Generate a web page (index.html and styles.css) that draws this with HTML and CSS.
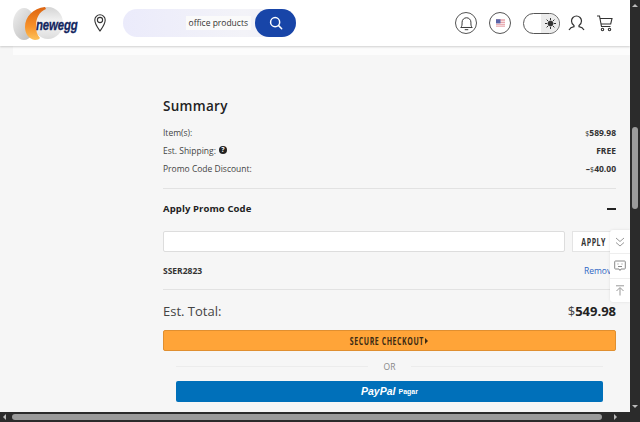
FILE: index.html
```html
<!DOCTYPE html>
<html lang="en">
<head>
<meta charset="utf-8">
<title>Newegg Summary</title>
<link rel="stylesheet" href="styles.css">
</head>
<body>
<div class="window">
  <div class="main-row">
    <div class="page">
      <header class="header">
        <div class="logo">
          <svg class="logo-art" width="68" height="42" viewBox="0 0 68 42">
            <defs>
              <linearGradient id="egg" x1="0" y1="0" x2="1" y2="1"><stop offset="0" stop-color="#f0f0f0"/><stop offset="1" stop-color="#b8b8b8"/></linearGradient>
              <linearGradient id="egg2" x1="0" y1="0" x2="0" y2="1"><stop offset="0" stop-color="#d4d4d4"/><stop offset=".5" stop-color="#f6f6f6"/><stop offset="1" stop-color="#dcdcdc"/></linearGradient>
              <linearGradient id="ora" x1="0" y1="0" x2="0" y2="1"><stop offset="0" stop-color="#dd6410"/><stop offset=".6" stop-color="#f7922a"/><stop offset="1" stop-color="#fdc25a"/></linearGradient>
            </defs>
            <ellipse cx="35" cy="21" rx="15" ry="16" fill="url(#egg2)"/>
            <ellipse cx="11" cy="22" rx="11" ry="16" fill="url(#egg)"/>
            <path d="M32 5C20 6 12 15 12 25c0 7 4 12 10 13 3 0 4-1 5-2-3-3-4-7-4-12C23 16 26 10 33 7z" fill="url(#ora)"/>
          </svg>
          <span class="logo-text">newegg</span>
        </div>
        <svg class="pin" width="12" height="18" viewBox="0 0 12 18" fill="none" stroke="#333" stroke-width="1.100"><path d="M6 17C3.500 13.500 .8 10 .8 6a5.200 5.200 0 0 1 10.400 0c0 4-2.700 7.500-5.200 11z"/><circle cx="6" cy="6" r="2.600"/></svg>
        <div class="search">
          <span class="search-term">office products</span>
          <span class="search-btn">
            <svg width="14" height="14" viewBox="0 0 16 16" fill="none" stroke="#fff" stroke-width="1.700"><circle cx="7" cy="7" r="5.200"/><path d="M11 11L14.500 14.500" stroke-linecap="round"/></svg>
          </span>
        </div>
        <div class="tools">
          <span class="round">
            <svg width="15" height="17" viewBox="0 0 17 18" fill="none" stroke="#333" stroke-width="1.100"><path d="M2 13.500c1.500-1.500 1.500-3 1.500-6a5 5 0 0 1 10 0c0 3 0 4.500 1.500 6z"/><path d="M6.500 16h4"/></svg>
          </span>
          <span class="round">
            <svg width="9" height="8" viewBox="0 0 12 10"><rect width="12" height="10" fill="#e8a6ad"/><rect y="2" width="12" height="1.500" fill="#f6e6e8"/><rect y="5" width="12" height="1.500" fill="#f6e6e8"/><rect y="8" width="12" height="1" fill="#f6e6e8"/><rect width="6" height="5.500" fill="#5a64a8"/></svg>
          </span>
          <span class="toggle">
            <span class="toggle-sun">
              <svg width="11" height="11" viewBox="0 0 11 11" stroke="#333" stroke-width="1"><circle cx="5.500" cy="5.500" r="2.500" fill="#333"/><path d="M5.500 0v2M5.500 9v2M0 5.500h2M9 5.500h2M1.600 1.600L3 3M8 8l1.400 1.400M1.600 9.400L3 8M8 3l1.400-1.400"/></svg>
            </span>
          </span>
          <svg class="user" width="17" height="16" viewBox="0 0 17 16" fill="none" stroke="#333" stroke-width="1.200"><path d="M1 15c1-2 3-3 5-3.300V10.500C4.500 9.500 3.500 8 3.500 6a5 5 0 0 1 10 0c0 2-1 3.500-2.500 4.500v1.200c2 .3 4 1.300 5 3.300"/></svg>
          <svg class="cart" width="17" height="17" viewBox="0 0 17 17" fill="none" stroke="#333" stroke-width="1.100"><path d="M1 1h2.500l2 10.500h9"/><path d="M4 3.500h12l-1.300 5.500H5"/><circle cx="6.500" cy="14.500" r="1.200"/><circle cx="13.500" cy="14.500" r="1.200"/></svg>
        </div>
      </header>
      <div class="band"></div>
      <section class="summary">
        <h2 class="title">Summary</h2>
        <div class="line"><span>Item(s):</span><span class="val"><small>$</small>589.98</span></div>
        <div class="line"><span class="with-help">Est. Shipping: <span class="help">?</span></span><span class="val">FREE</span></div>
        <div class="line"><span>Promo Code Discount:</span><span class="val">–<small>$</small>40.00</span></div>
        <hr class="rule rule-a">
        <div class="promo-head"><strong>Apply Promo Code</strong><span class="minus"></span></div>
        <div class="promo-form">
          <span class="input"></span>
          <span class="apply"><span class="cond">APPLY</span></span>
        </div>
        <div class="applied"><strong>SSER2823</strong><span class="remove">Remove</span></div>
        <hr class="rule rule-b">
        <div class="total"><span>Est. Total:</span><span class="amount"><small>$</small><b>549.98</b></span></div>
        <div class="checkout"><span class="cond">SECURE CHECKOUT</span><i class="tri"></i></div>
        <div class="or"><span class="or-line"></span><span class="or-text">OR</span><span class="or-line"></span></div>
        <div class="paypal"><em>PayPal</em><span>Pagar</span></div>
      </section>
      <aside class="float">
        <span class="float-cell">
          <svg width="10" height="10" viewBox="0 0 10 10" fill="none" stroke="#999" stroke-width="1"><path d="M1 1l4 3.500L9 1M1 5.500L5 9l4-3.500"/></svg>
        </span>
        <span class="float-cell">
          <svg width="12" height="12" viewBox="0 0 12 12" fill="none" stroke="#888" stroke-width="1"><path d="M1.500 1h9a.8.8 0 0 1 .8.8v6.400a.8.8 0 0 1-.8.8H7L6 10.500 5 9H1.500a.8.8 0 0 1-.8-.8V1.800a.8.8 0 0 1 .8-.8z"/><path d="M4 3.500v1M8 3.500v1M4 6.500h4"/></svg>
        </span>
        <span class="float-cell">
          <svg width="10" height="11" viewBox="0 0 10 11" fill="none" stroke="#999" stroke-width="1"><path d="M1 .800h8M5 10.500V3M1.500 6L5 2.500 8.500 6"/></svg>
        </span>
      </aside>
    </div>
    <div class="vbar">
      <i class="arr-up"></i>
      <span class="vthumb"></span>
      <i class="arr-down"></i>
    </div>
  </div>
  <div class="hbar">
    <i class="arr-left"></i>
    <span class="hthumb"></span>
    <i class="arr-right"></i>
  </div>
</div>
</body>
</html>
```

FILE: styles.css
```css
* { box-sizing: border-box; }
html, body { margin: 0; height: 100%; overflow: hidden; }
body { font-family: "Open Sans", "Liberation Sans", sans-serif; color: #222; background: #f5f5f5; }

.window { width: 640px; height: 422px; display: flex; flex-direction: column; }
.main-row { flex: 1; display: flex; min-height: 0; }
.page { position: relative; flex: 1; min-width: 0; overflow: hidden; background: #f6f6f6; }

/* header */
.header { height: 46px; background: #fff; box-shadow: 0 1px 2px rgba(0,0,0,.18); display: flex; align-items: center; padding-left: 13px; position: relative; }
.logo { position: relative; width: 68px; height: 42px; flex: none; }
.logo-art { display: block; }
.logo-text { position: absolute; left: 23px; top: 14px; font: italic 700 15px/18px "Liberation Sans", sans-serif; letter-spacing: -.2px; color: #13265f; transform: scaleX(.76); transform-origin: left; -webkit-text-stroke: .3px #13265f; }
.pin { margin-left: 13px; flex: none; }
.search { margin-left: 17px; width: 173px; height: 28px; border-radius: 14px; background: linear-gradient(90deg, #ebebfb, #f3f3f8 70%, #eeeef8); display: flex; align-items: center; justify-content: flex-end; flex: none; }
.search-term { font-size: 8.500px; line-height: 14px; padding: 0 3px; background: #fafafa; color: #333; margin-right: 4px; white-space: nowrap; }
.search-btn { width: 41px; height: 28px; border-radius: 14px; background: #1845a8; display: flex; align-items: center; justify-content: center; }
.tools { margin-left: auto; display: flex; align-items: center; padding-right: 17px; }
.round { width: 22px; height: 22px; border-radius: 50%; border: 1px solid #555; display: flex; align-items: center; justify-content: center; margin-right: 12px; background: #fff; }
.toggle { width: 37px; height: 21px; border-radius: 11px; border: 1px solid #555; display: flex; justify-content: flex-end; overflow: hidden; background: #fff; margin-right: 8px; }
.toggle-sun { width: 18px; background: #ececec; display: flex; align-items: center; justify-content: center; }
.user { margin-right: 11px; }
.band { height: 9px; margin-left: 13px; background: #fcfcfc; }

/* summary */
.summary { width: 453px; margin-left: 163px; padding-top: 42px; }
.title { margin: 0 0 8px; font-size: 13.500px; line-height: 18px; font-weight: 600; letter-spacing: .3px; color: #222; }
.line { display: flex; justify-content: space-between; align-items: center; height: 18px; font-size: 8.500px; color: #444; }
.with-help { display: flex; align-items: center; gap: 3px; }
.help { width: 8px; height: 8px; border-radius: 50%; background: #222; color: #fff; font-size: 7px; font-weight: 700; line-height: 8px; text-align: center; }
.val { font-weight: 700; color: #333; }
.val small { font-size: 7px; font-weight: 400; }
.rule { margin: 0; border: 0; height: 1px; background: #e2e2e2; }
.rule-a { margin-top: 11px; }
.promo-head { display: flex; justify-content: space-between; align-items: center; height: 39px; font-size: 9.500px; }
.promo-head strong { font-weight: 700; letter-spacing: .1px; }
.minus { width: 9px; height: 2px; background: #222; }
.promo-form { display: flex; justify-content: space-between; margin-top: 3px; }
.input { width: 402px; height: 21px; background: #fff; border: 1px solid #ddd; border-radius: 2px; }
.cond { display: inline-block; font-family: "Open Sans", sans-serif; font-weight: 700; font-size: 10px; letter-spacing: .8px; transform: scaleX(.7); white-space: nowrap; }
.apply { width: 44px; height: 21px; background: #fff; border: 1px solid #e4e4e4; display: flex; align-items: center; justify-content: center; color: #333; overflow: hidden; }
.applied { display: flex; justify-content: space-between; align-items: center; height: 18px; margin-top: 9px; font-size: 8.500px; }
.applied strong { font-weight: 700; color: #333; }
.remove { color: #2f66c4; }
.rule-b { margin-top: 10px; }
.total { display: flex; justify-content: space-between; align-items: center; height: 22px; margin-top: 10px; font-size: 13px; color: #444; }
.amount small { font-size: 13px; color: #444; }
.amount b { font-weight: 700; color: #222; }
.checkout { margin-top: 8px; height: 21px; background: #ffa438; border: 1px solid #e08f30; border-radius: 2px; display: flex; align-items: center; justify-content: center; color: #3a2a14; }
.checkout .cond { margin: 0 -17px 0 -17px; }
.tri { width: 0; height: 0; margin-left: 2px; border-left: 3px solid #3a2a14; border-top: 3px solid transparent; border-bottom: 3px solid transparent; }
.or { display: flex; align-items: center; gap: 16px; height: 30px; padding: 0 13px; font-size: 8.500px; color: #888; }
.or-line { flex: 1; height: 1px; background: #ececec; }
.paypal { margin: 0 13px; height: 21px; background: #0070ba; border-radius: 2px; display: flex; align-items: center; justify-content: center; gap: 3px; color: #fff; font: 700 7px/1 "Liberation Sans", sans-serif; }
.paypal em { font-size: 10.500px; }

/* floating tools */
.float { position: absolute; left: 610px; top: 230px; width: 20px; height: 72px; background: #fff; border-radius: 3px 0 0 3px; box-shadow: 0 0 3px rgba(0,0,0,.1); display: flex; flex-direction: column; }
.float-cell { flex: 1; display: flex; align-items: center; justify-content: center; }
.float-cell + .float-cell { border-top: 1px solid #eee; }

/* scrollbars */
.vbar { width: 10px; background: #2b2b2b; display: flex; flex-direction: column; align-items: center; padding-top: 4px; }
.vthumb { width: 6px; height: 82px; border-radius: 3px; background: #9b9b9b; margin-top: 120px; }
.arr-up { border-left: 3px solid transparent; border-right: 3px solid transparent; border-bottom: 3px solid #bbb; }
.arr-down { border-left: 3px solid transparent; border-right: 3px solid transparent; border-top: 3px solid #bbb; margin-top: auto; margin-bottom: 4px; }
.hbar { height: 10px; background: #2b2b2b; display: flex; align-items: center; padding: 0 6px 0 3px; }
.hthumb { width: 590px; height: 6px; border-radius: 3px; background: #9b9b9b; margin-left: 6px; }
.arr-left { border-top: 3px solid transparent; border-bottom: 3px solid transparent; border-right: 3px solid #bbb; }
.arr-right { border-top: 3px solid transparent; border-bottom: 3px solid transparent; border-left: 3px solid #bbb; margin-left: auto; margin-right: 17px; }
```
